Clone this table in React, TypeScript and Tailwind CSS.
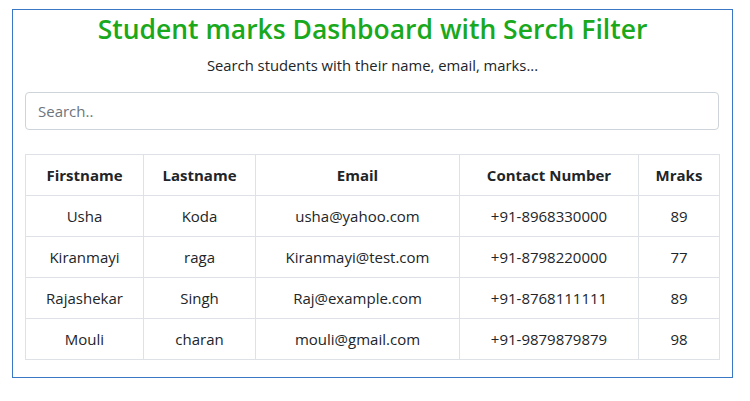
const students = [
  { first: "Usha", last: "Koda", email: "usha@yahoo.com", phone: "+91-8968330000", marks: 89 },
  { first: "Kiranmayi", last: "raga", email: "Kiranmayi@test.com", phone: "+91-8798220000", marks: 77 },
  { first: "Rajashekar", last: "Singh", email: "Raj@example.com", phone: "+91-8768111111", marks: 89 },
  { first: "Mouli", last: "charan", email: "mouli@gmail.com", phone: "+91-9879879879", marks: 98 },
];

export default function App() {
  return (
    <div className="w-[750px] h-[401px] bg-white pt-[9px] pl-[12px] font-['Open_Sans',sans-serif] text-[#212529]">
      <div className="w-[721px] h-[369px] border border-[#3a77c4] px-[12px]">
        {/* Heading */}
        <h1 className="h-[39px] leading-[39px] text-center text-[26.5px] font-semibold text-[#1aa81c]">
          Student marks Dashboard with Serch Filter
        </h1>
        <p className="mt-[4px] h-[24px] leading-[24px] text-center text-[14.8px]">
          Search students with their name, email, marks...
        </p>

        {/* Search */}
        <input
          type="text"
          placeholder="Search.."
          className="mt-[15px] block w-[694px] h-[38px] px-[12px] border border-[#ced4da] rounded-[4px] text-[15px] placeholder:text-[#6c757d] outline-none"
        />

        {/* Table */}
        <table className="mt-[24px] w-[694px] border-collapse table-fixed text-[15px]">
          <colgroup>
            <col className="w-[118px]" />
            <col className="w-[112px]" />
            <col className="w-[204px]" />
            <col className="w-[179px]" />
            <col className="w-[81px]" />
          </colgroup>
          <thead>
            <tr className="h-[41px]">
              {["Firstname", "Lastname", "Email", "Contact Number", "Mraks"].map((h) => (
                <th key={h} className="border border-[#dee2e6] font-bold text-center">{h}</th>
              ))}
            </tr>
          </thead>
          <tbody>
            {students.map((s) => (
              <tr key={s.email} className="h-[41px]">
                <td className="border border-[#dee2e6] text-center">{s.first}</td>
                <td className="border border-[#dee2e6] text-center">{s.last}</td>
                <td className="border border-[#dee2e6] text-center">{s.email}</td>
                <td className="border border-[#dee2e6] text-center">{s.phone}</td>
                <td className="border border-[#dee2e6] text-center">{s.marks}</td>
              </tr>
            ))}
          </tbody>
        </table>
      </div>
    </div>
  );
}
